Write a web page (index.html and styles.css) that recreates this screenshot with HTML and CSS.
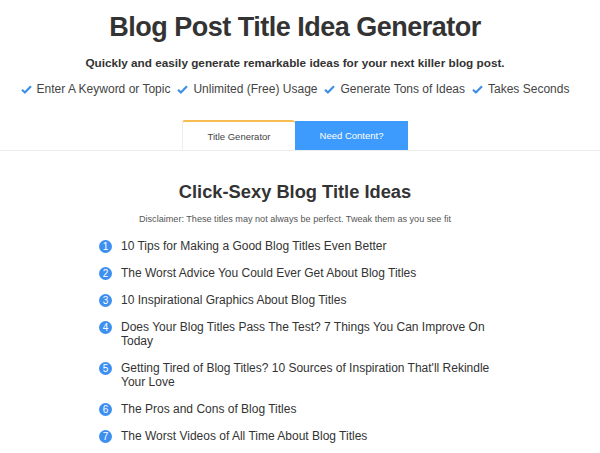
FILE: index.html
```html
<!DOCTYPE html>
<html>
<head>
<meta charset="utf-8">
<link rel="stylesheet" href="styles.css">
</head>
<body>
<header class="hero">
  <h1 class="title">Blog Post Title Idea Generator</h1>
  <p class="subtitle">Quickly and easily generate remarkable ideas for your next killer blog post.</p>
  <ul class="features">
    <li><svg class="check" viewBox="0 0 12 10"><path d="M1 5.2 L4.2 8.4 L11 1.4" fill="none" stroke="#3d8fe6" stroke-width="2.4" stroke-linejoin="round"/></svg>Enter A Keyword or Topic</li>
    <li><svg class="check" viewBox="0 0 12 10"><path d="M1 5.2 L4.2 8.4 L11 1.4" fill="none" stroke="#3d8fe6" stroke-width="2.4" stroke-linejoin="round"/></svg>Unlimited (Free) Usage</li>
    <li><svg class="check" viewBox="0 0 12 10"><path d="M1 5.2 L4.2 8.4 L11 1.4" fill="none" stroke="#3d8fe6" stroke-width="2.4" stroke-linejoin="round"/></svg>Generate Tons of Ideas</li>
    <li><svg class="check" viewBox="0 0 12 10"><path d="M1 5.2 L4.2 8.4 L11 1.4" fill="none" stroke="#3d8fe6" stroke-width="2.4" stroke-linejoin="round"/></svg>Takes Seconds</li>
  </ul>
  <nav class="tabs">
    <div class="tab tab-active">Title Generator</div>
    <div class="tab tab-blue">Need Content?</div>
  </nav>
</header>
<main class="results">
  <h2 class="heading">Click-Sexy Blog Title Ideas</h2>
  <p class="disclaimer">Disclaimer: These titles may not always be perfect. Tweak them as you see fit</p>
  <ol class="ideas">
    <li><span class="num">1</span><span class="text">10 Tips for Making a Good Blog Titles Even Better</span></li>
    <li><span class="num">2</span><span class="text">The Worst Advice You Could Ever Get About Blog Titles</span></li>
    <li><span class="num">3</span><span class="text">10 Inspirational Graphics About Blog Titles</span></li>
    <li><span class="num">4</span><span class="text">Does Your Blog Titles Pass The Test? 7 Things You Can Improve On Today</span></li>
    <li><span class="num">5</span><span class="text">Getting Tired of Blog Titles? 10 Sources of Inspiration That'll Rekindle Your Love</span></li>
    <li><span class="num">6</span><span class="text">The Pros and Cons of Blog Titles</span></li>
    <li><span class="num">7</span><span class="text">The Worst Videos of All Time About Blog Titles</span></li>
  </ol>
</main>
</body>
</html>
```

FILE: styles.css
```css
html, body {
  margin: 0;
  padding: 0;
  background: #ffffff;
}
body {
  font-family: "Liberation Sans", Arial, sans-serif;
  color: #333333;
}
.hero {
  display: flex;
  flex-direction: column;
  align-items: center;
  padding-right: 10px;
  border-bottom: 1px solid #ececec;
}
.title {
  margin: 10px 0 0 0;
  font-size: 27px;
  line-height: 34px;
  letter-spacing: -0.5px;
  font-weight: bold;
  color: #333333;
}
.subtitle {
  margin: 12px 0 0 0;
  font-size: 11.75px;
  line-height: 14px;
  font-weight: bold;
  color: #333333;
}
.features {
  list-style: none;
  margin: 11px 0 0 0;
  padding: 0;
  display: flex;
  gap: 7px;
  font-size: 12px;
  line-height: 16px;
  color: #444444;
}
.features li {
  display: flex;
  align-items: center;
}
.check {
  width: 11px;
  height: 9px;
  margin-right: 5px;
}
.tabs {
  display: flex;
  margin-top: 23px;
}
.tab {
  width: 113px;
  display: flex;
  align-items: center;
  justify-content: center;
  font-size: 9.5px;
}
.tab-active {
  background: #ffffff;
  color: #444444;
  border-top: 2px solid #f5bd52;
  border-left: 1px solid #eeeeee;
  border-radius: 3px 3px 0 0;
  height: 28px;
  width: 112px;
}
.tab-blue {
  background: #3d9bfd;
  color: #ffffff;
  margin-top: 1px;
  height: 29px;
}
.results {
  display: flex;
  flex-direction: column;
  align-items: center;
  padding-right: 10px;
}
.heading {
  margin: 29px 0 0 0;
  font-size: 18.3px;
  line-height: 24px;
  font-weight: bold;
  color: #333333;
}
.disclaimer {
  margin: 9px 0 0 0;
  font-size: 9.1px;
  line-height: 12px;
  color: #555555;
}
.ideas {
  list-style: none;
  margin: 14px 0 0 0;
  padding: 0;
  width: 392px;
  display: flex;
  flex-direction: column;
  gap: 13px;
}
.ideas li {
  display: flex;
  align-items: flex-start;
}
.num {
  flex: none;
  width: 13px;
  height: 13px;
  border-radius: 50%;
  background: #3d8ff0;
  color: #ffffff;
  font-size: 10px;
  line-height: 13px;
  text-align: center;
  margin: 1px 9px 0 0;
}
.text {
  font-size: 12px;
  line-height: 14px;
  color: #333333;
  max-width: 370px;
}
```
